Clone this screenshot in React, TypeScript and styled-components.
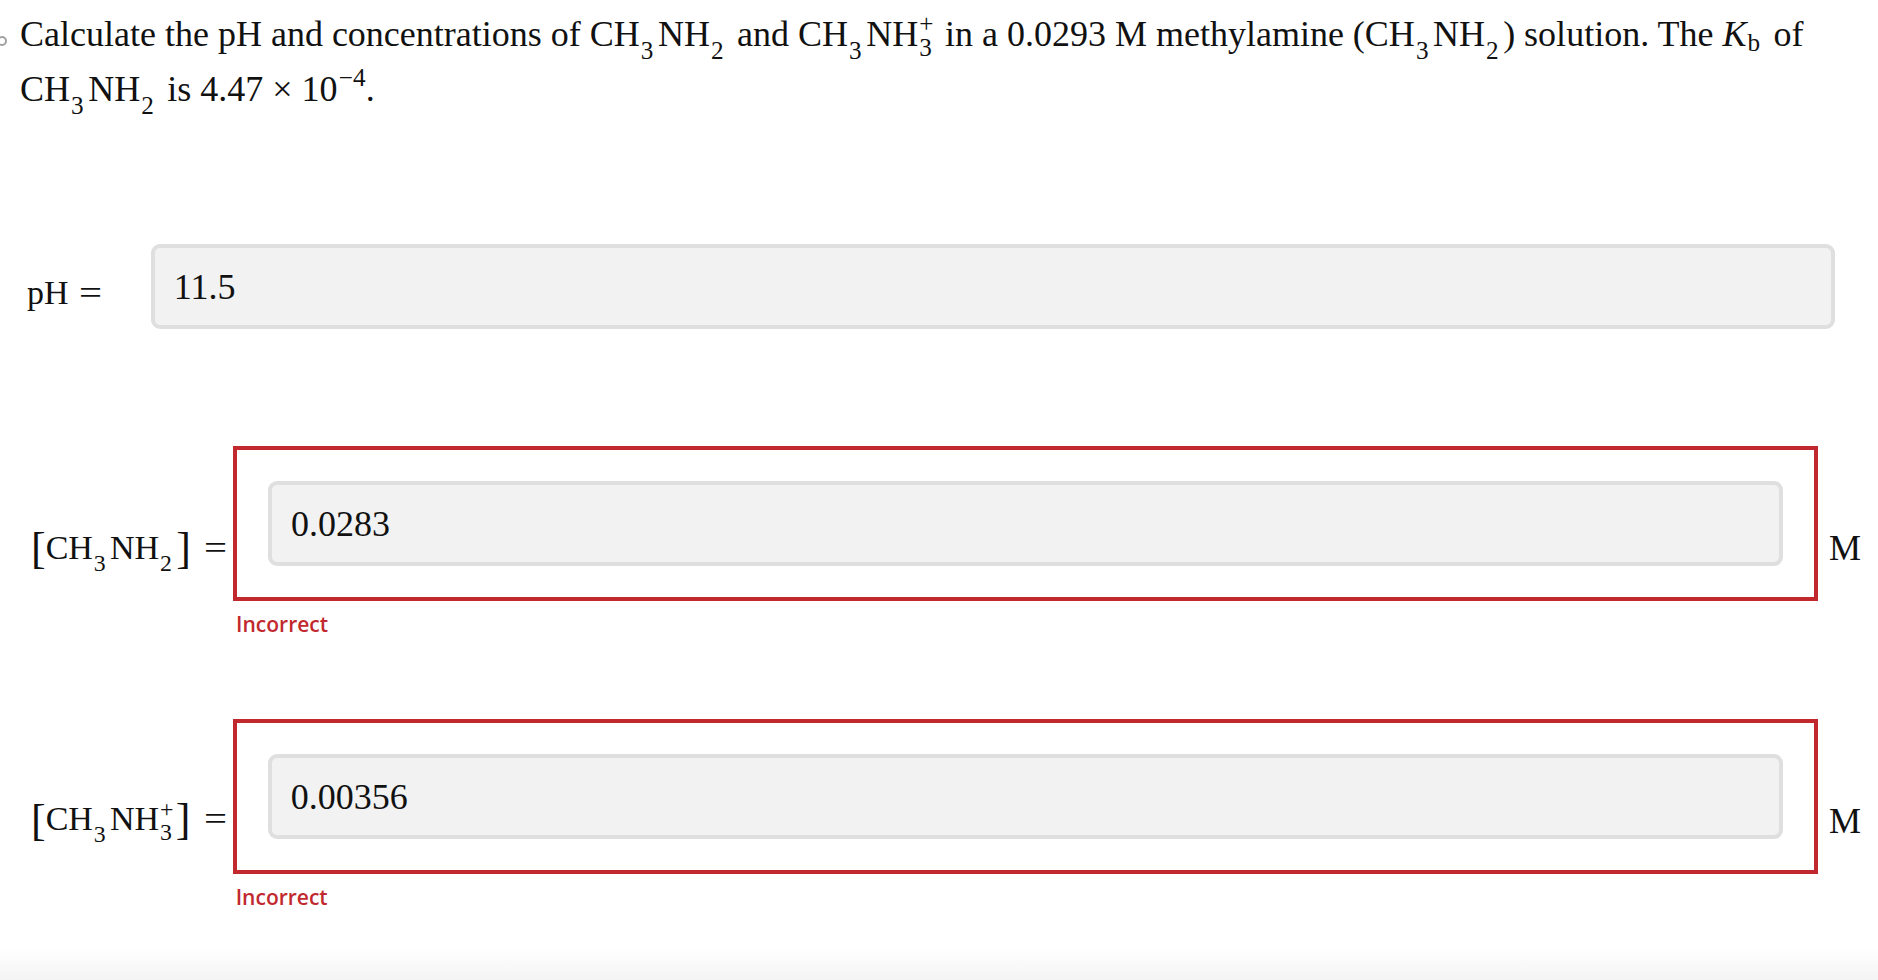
import React from 'react';
import styled, { createGlobalStyle } from 'styled-components';

const GlobalStyle = createGlobalStyle`
  html {
    height: 100%;
    background: linear-gradient(to bottom, #fff 0, #fff 948px, #f4f4f4 980px);
  }
  body {
    margin: 0;
    font-family: "Liberation Serif", "Times New Roman", serif;
    color: #111;
    overflow-x: hidden;
  }
`;

const Page = styled.main`
  padding-top: 7px;
`;

const Question = styled.p`
  margin: 0;
  padding: 0 40px 0 20px;
  font-size: 36px;
  line-height: 55px;
`;

const Marker = styled.span`
  display: inline-block;
  width: 6px;
  height: 6px;
  border: 2px solid #a0a0a0;
  border-radius: 50%;
  margin: 0 13px 0 -23px;
`;

const Sub = styled.sub`
  font-size: 0.7em;
  line-height: 0;
  vertical-align: -0.5em;
  margin: 0 0.18em 0 0.04em;
`;

const Sup = styled.sup`
  font-size: 0.7em;
  line-height: 0;
  vertical-align: 0.6em;
  margin-left: 0.05em;
`;

const Stack = styled.span`
  display: inline-block;
  font-size: 0.7em;
  line-height: 0.95em;
  vertical-align: -0.4em;
  margin: 0 0.1em 0 0.04em;
  text-align: left;
`;

const StackLine = styled.span`
  display: block;
`;

const Italic = styled.i`
  font-style: italic;
`;

const Answers = styled.div`
  display: flex;
  flex-direction: column;
`;

const Row = styled.div<{ $top: number; $right: number }>`
  display: flex;
  align-items: center;
  margin-top: ${p => p.$top}px;
  padding: 0 ${p => p.$right}px 0 27px;
`;

const Label = styled.span<{ $gap: number }>`
  font-size: 34px;
  line-height: 40px;
  padding-top: 12px;
  margin-right: ${p => p.$gap}px;
  white-space: nowrap;
`;

const Bracket = styled.span<{ $open?: boolean }>`
  font-size: 44px;
  line-height: 0;
  vertical-align: -0.1em;
  margin-left: ${p => (p.$open ? 4 : 0)}px;
`;

const Rel = styled.span<{ $space: number }>`
  display: inline-block;
  margin-left: ${p => p.$space}px;
  transform: scaleX(1.2);
`;

const Field = styled.div`
  flex: 1;
  display: flex;
  flex-direction: column;
`;

const WrongBox = styled.div`
  border: 4px solid #c1292e;
  padding: 31px;
`;

const Input = styled.input`
  box-sizing: border-box;
  width: 100%;
  height: 85px;
  margin: 0;
  border: 4px solid #dfdfdf;
  border-radius: 9px;
  background: #f2f2f2;
  padding: 0 19px;
  font: 36px "Liberation Serif", "Times New Roman", serif;
  color: #111;
  outline: none;
`;

const Feedback = styled.div`
  margin-top: 9px;
  padding-left: 3px;
  font-family: "Open Sans", "Noto Sans", sans-serif;
  font-weight: 600;
  font-size: 21px;
  line-height: 28px;
  color: #c1292e;
`;

const Unit = styled.span`
  margin-left: 11px;
  font-size: 36px;
  line-height: 40px;
  padding-top: 12px;
`;

const MeNH2 = () => (
  <>
    CH<Sub>3</Sub>NH<Sub>2</Sub>
  </>
);

const MeNH3 = () => (
  <>
    CH<Sub>3</Sub>NH
    <Stack>
      <StackLine>+</StackLine>
      <StackLine>3</StackLine>
    </Stack>
  </>
);

export default function App() {
  return (
    <Page>
      <GlobalStyle />
      <Question>
        <Marker />
        Calculate the pH and concentrations of <MeNH2 /> and <MeNH3 /> in a 0.0293 M methylamine
        (<MeNH2 />) solution. The <Italic>K</Italic>
        <Sub style={{ verticalAlign: '-0.2em' }}>b</Sub> of <MeNH2 /> is 4.47 × 10<Sup>−4</Sup>.
      </Question>

      <Answers>
        <Row $top={127} $right={43}>
          <Label $gap={51}>
            pH<Rel $space={12}>=</Rel>
          </Label>
          <Field>
            <Input readOnly value="11.5" />
          </Field>
        </Row>

        <Row $top={117} $right={17}>
          <Label $gap={8}>
            <Bracket $open>[</Bracket>
            <MeNH2 />
            <Bracket>]</Bracket>
            <Rel $space={15}>=</Rel>
          </Label>
          <Field>
            <WrongBox>
              <Input readOnly value="0.0283" />
            </WrongBox>
            <Feedback>Incorrect</Feedback>
          </Field>
          <Unit>M</Unit>
        </Row>

        <Row $top={81} $right={17}>
          <Label $gap={8}>
            <Bracket $open>[</Bracket>
            <MeNH3 />
            <Bracket>]</Bracket>
            <Rel $space={15}>=</Rel>
          </Label>
          <Field>
            <WrongBox>
              <Input readOnly value="0.00356" />
            </WrongBox>
            <Feedback>Incorrect</Feedback>
          </Field>
          <Unit>M</Unit>
        </Row>
      </Answers>
    </Page>
  );
}
